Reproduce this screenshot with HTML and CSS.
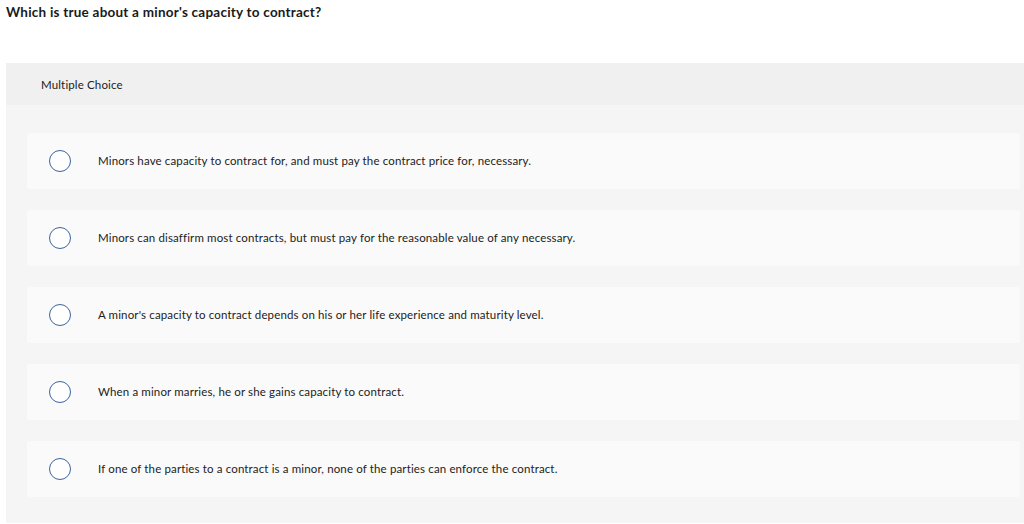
FILE: index.html
```html
<!DOCTYPE html>
<html>
<head>
<meta charset="utf-8">
<link rel="stylesheet" href="styles.css">
</head>
<body>
<div class="page">
  <h1 class="question">Which is true about a minor's capacity to contract?</h1>
  <div class="panel">
    <div class="panel-head">Multiple Choice</div>
    <div class="options">
      <div class="option"><span class="radio"></span><span class="label">Minors have capacity to contract for, and must pay the contract price for, necessary.</span></div>
      <div class="option"><span class="radio"></span><span class="label">Minors can disaffirm most contracts, but must pay for the reasonable value of any necessary.</span></div>
      <div class="option"><span class="radio"></span><span class="label">A minor's capacity to contract depends on his or her life experience and maturity level.</span></div>
      <div class="option"><span class="radio"></span><span class="label">When a minor marries, he or she gains capacity to contract.</span></div>
      <div class="option"><span class="radio"></span><span class="label">If one of the parties to a contract is a minor, none of the parties can enforce the contract.</span></div>
    </div>
  </div>
</div>
</body>
</html>
```
FILE: styles.css
```css
html, body {
  margin: 0;
  padding: 0;
  background: #ffffff;
}
body {
  font-family: Lato, "Liberation Sans", sans-serif;
  color: #222;
}
.page {
  padding: 0 0 0 6px;
}
.question {
  margin: 0;
  padding-top: 4px;
  height: 59px;
  font-size: 13.5px;
  letter-spacing: 0.23px;
  font-weight: 700;
  line-height: 16px;
  color: #1a1a1a;
}
.panel {
  background: #f5f5f5;
  height: 460px;
}
.panel-head {
  background: #f0f0f0;
  height: 42px;
  display: flex;
  align-items: center;
  padding-left: 35px;
  font-size: 11.5px;
  letter-spacing: 0.14px;
  color: #222;
}
.options {
  display: flex;
  flex-direction: column;
  gap: 21px;
  padding: 28px 4px 0 21px;
}
.option {
  background: #fafafa;
  border-radius: 3px;
  height: 56px;
  display: flex;
  align-items: center;
}
.radio {
  width: 20px;
  height: 20px;
  border: 1.5px solid #3a64a0;
  border-radius: 50%;
  background: #fff;
  margin-left: 22px;
  flex: none;
}
.label {
  margin-left: 27px;
  font-size: 11.5px;
  letter-spacing: 0.14px;
  color: #222;
  position: relative;
  top: -1px;
}
```
